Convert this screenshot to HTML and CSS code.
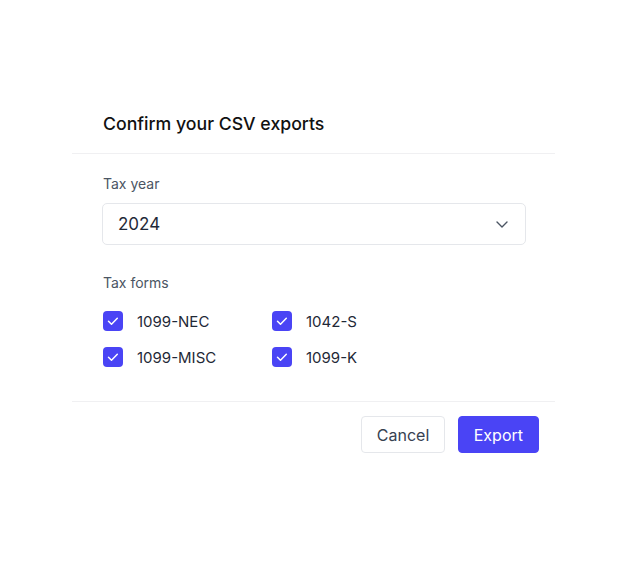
FILE: index.html
```html
<!DOCTYPE html>
<html lang="en">
<head>
  <meta charset="UTF-8" />
  <title>Confirm your CSV exports</title>
  <link rel="stylesheet" href="styles.css">
</head>
<body>
  <div class="modal">
    <div class="modal-header">
      <h2>Confirm your CSV exports</h2>
    </div>

    <div class="modal-body">
      <label class="field-label">Tax year</label>
      <div class="select">
        <span>2024</span>
        <svg width="12" height="12" viewBox="0 0 12 12" fill="none">
          <path d="M1 4l5 5 5-5" stroke="#4b5563" stroke-width="1.4" stroke-linecap="round" stroke-linejoin="round"/>
        </svg>
      </div>

      <label class="field-label forms-label">Tax forms</label>
      <div class="forms">
        <div class="check-row"><span class="box"><svg width="20" height="20" viewBox="0 0 20 20"><path d="M5.5 10.2l3 3 5.8-5.9" stroke="#fff" stroke-width="1.5" fill="none" stroke-linecap="round" stroke-linejoin="round"/></svg></span>1099-NEC</div>
        <div class="check-row"><span class="box"><svg width="20" height="20" viewBox="0 0 20 20"><path d="M5.5 10.2l3 3 5.8-5.9" stroke="#fff" stroke-width="1.5" fill="none" stroke-linecap="round" stroke-linejoin="round"/></svg></span>1042-S</div>
        <div class="check-row"><span class="box"><svg width="20" height="20" viewBox="0 0 20 20"><path d="M5.5 10.2l3 3 5.8-5.9" stroke="#fff" stroke-width="1.5" fill="none" stroke-linecap="round" stroke-linejoin="round"/></svg></span>1099-MISC</div>
        <div class="check-row"><span class="box"><svg width="20" height="20" viewBox="0 0 20 20"><path d="M5.5 10.2l3 3 5.8-5.9" stroke="#fff" stroke-width="1.5" fill="none" stroke-linecap="round" stroke-linejoin="round"/></svg></span>1099-K</div>
      </div>
    </div>

    <div class="modal-footer">
      <button class="btn btn-cancel">Cancel</button>
      <button class="btn btn-export">Export</button>
    </div>
  </div>
</body>
</html>
```

FILE: styles.css
```css
body {
  font-family: Inter, 'Noto Sans', sans-serif;
  background: #fff;
  margin: 0;
}

.modal {
  width: 483px;
  margin: 96px 0 0 72px;
}

.modal-header {
  padding: 14px 31px 15px;
  border-bottom: 1px solid #f0f0f2;
}

h2 {
  margin: 0;
  font-size: 17.7px;
  line-height: 28px;
  font-weight: 500;
  color: #111;
}

.modal-body {
  padding: 20px 29px 34px 30px;
  border-bottom: 1px solid #f0f0f2;
}

.field-label {
  display: block;
  font-size: 14px;
  line-height: 20px;
  color: #4b5563;
  margin-left: 1px;
}

.select {
  margin-top: 9px;
  height: 42px;
  box-sizing: border-box;
  border: 1px solid #e5e7eb;
  border-radius: 5px;
  display: flex;
  align-items: center;
  justify-content: space-between;
  padding: 0 17px 0 15px;
  font-size: 17px;
  color: #1f2937;
}

.forms-label {
  margin-top: 28px;
}

.forms {
  margin-top: 18px;
  margin-left: 1px;
  display: grid;
  grid-template-columns: 169px auto;
  row-gap: 16px;
}

.check-row {
  display: flex;
  align-items: center;
  gap: 14px;
  height: 20px;
  font-size: 15px;
  color: #1f2937;
}

.box {
  width: 20px;
  height: 20px;
  border-radius: 4px;
  background: #4a44f5;
  display: flex;
  align-items: center;
  justify-content: center;
}

.modal-footer {
  display: flex;
  justify-content: flex-end;
  gap: 13px;
  padding: 14px 16px 0;
}

.btn {
  height: 37px;
  border-radius: 4px;
  font-family: inherit;
  font-size: 16px;
  padding: 0 15px;
  cursor: pointer;
}

.btn-cancel {
  background: #fff;
  border: 1px solid #e5e7eb;
  color: #374151;
  padding: 0 14.5px;
}

.btn-export {
  background: #4a44f5;
  border: 1px solid #4a44f5;
  color: #fff;
}
```
